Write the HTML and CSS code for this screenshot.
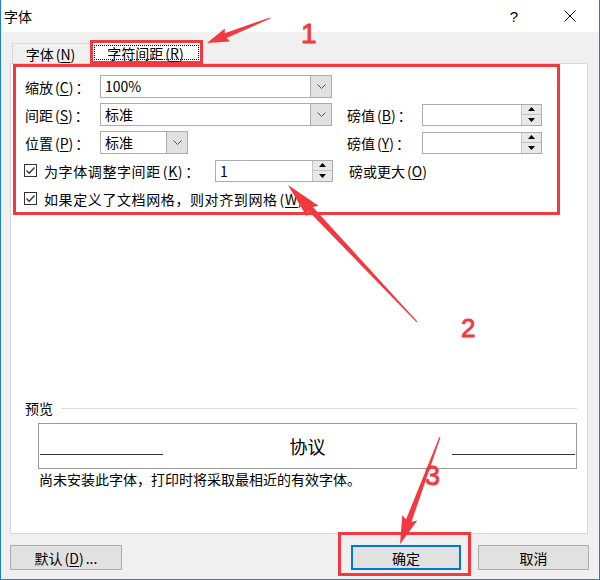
FILE: index.html
```html
<!DOCTYPE html>
<html lang="zh-CN">
<head>
  <meta charset="UTF-8">
  <meta name="viewport" content="width=device-width, initial-scale=1.0">
  <title>字体</title>
  <link rel="stylesheet" href="styles.css">
</head>
<body>
  <div class="window">
    <div class="titlebar">
      <span class="title">字体</span>
      <span class="help">?</span>
      <span class="close">
        <svg width="12" height="12" viewBox="0 0 12 12"><path d="M0.5 0.5L11.5 11.5M11.5 0.5L0.5 11.5" stroke="#000" stroke-width="1" fill="none"/></svg>
      </span>
    </div>

    <div class="dialog">
      <div class="tabs">
        <div class="tab">字体<span class="acc">(<u>N</u>)</span></div>
        <div class="tab active"><span class="focus">字符间距<span class="acc">(<u>R</u>)</span></span></div>
      </div>

      <div class="panel">
        <div class="options">
          <div class="row">
            <label class="lbl">缩放<span class="acc">(<u>C</u>)</span>：</label>
            <div class="combo wide">
              <span class="val">100%</span>
              <span class="drop"><svg width="9" height="5" viewBox="0 0 9 5"><polyline points="0.5,0.5 4.5,4.5 8.5,0.5" fill="none" stroke="#555"/></svg></span>
            </div>
          </div>

          <div class="row">
            <label class="lbl">间距<span class="acc">(<u>S</u>)</span>：</label>
            <div class="combo wide">
              <span class="val">标准</span>
              <span class="drop"><svg width="9" height="5" viewBox="0 0 9 5"><polyline points="0.5,0.5 4.5,4.5 8.5,0.5" fill="none" stroke="#555"/></svg></span>
            </div>
            <label class="lbl side">磅值<span class="acc">(<u>B</u>)</span>：</label>
            <div class="spin">
              <span class="field"></span>
              <span class="spin-btns">
                <span class="sb"><svg width="7" height="4" viewBox="0 0 7 4"><polygon points="0,4 3.5,0 7,4"/></svg></span>
                <span class="sb"><svg width="7" height="4" viewBox="0 0 7 4"><polygon points="0,0 3.5,4 7,0"/></svg></span>
              </span>
            </div>
          </div>

          <div class="row">
            <label class="lbl">位置<span class="acc">(<u>P</u>)</span>：</label>
            <div class="combo narrow">
              <span class="val">标准</span>
              <span class="drop"><svg width="9" height="5" viewBox="0 0 9 5"><polyline points="0.5,0.5 4.5,4.5 8.5,0.5" fill="none" stroke="#555"/></svg></span>
            </div>
            <label class="lbl side push">磅值<span class="acc">(<u>Y</u>)</span>：</label>
            <div class="spin">
              <span class="field"></span>
              <span class="spin-btns">
                <span class="sb"><svg width="7" height="4" viewBox="0 0 7 4"><polygon points="0,4 3.5,0 7,4"/></svg></span>
                <span class="sb"><svg width="7" height="4" viewBox="0 0 7 4"><polygon points="0,0 3.5,4 7,0"/></svg></span>
              </span>
            </div>
          </div>

          <div class="row">
            <label class="check-lbl">
              <span class="box"><svg width="11" height="11" viewBox="0 0 11 11"><polyline points="1.5,5.5 4.2,8.2 9.5,2.5" fill="none" stroke="#333" stroke-width="1.3"/></svg></span>
              为字体调整字间距<span class="acc">(<u>K</u>)</span>：
            </label>
            <div class="spin short">
              <span class="field">1</span>
              <span class="spin-btns">
                <span class="sb"><svg width="7" height="4" viewBox="0 0 7 4"><polygon points="0,4 3.5,0 7,4"/></svg></span>
                <span class="sb"><svg width="7" height="4" viewBox="0 0 7 4"><polygon points="0,0 3.5,4 7,0"/></svg></span>
              </span>
            </div>
            <span class="unit">磅或更大<span class="acc">(<u>O</u>)</span></span>
          </div>

          <div class="row">
            <label class="check-lbl">
              <span class="box"><svg width="11" height="11" viewBox="0 0 11 11"><polyline points="1.5,5.5 4.2,8.2 9.5,2.5" fill="none" stroke="#333" stroke-width="1.3"/></svg></span>
              如果定义了文档网格，则对齐到网格<span class="acc">(<u>W</u>)</span>
            </label>
          </div>
        </div>

        <div class="preview">
          <div class="preview-head">
            <span>预览</span>
            <span class="sep"></span>
          </div>
          <div class="preview-box">
            <span class="rule"></span>
            <span class="sample">协议</span>
            <span class="rule"></span>
          </div>
          <div class="note">尚未安装此字体，打印时将采取最相近的有效字体。</div>
        </div>
      </div>

      <div class="footer">
        <button class="btn">默认<span class="acc">(<u>D</u>)</span>...</button>
        <span class="mark"><button class="btn default">确定</button></span>
        <button class="btn cancel">取消</button>
      </div>
    </div>
  </div>

  <!-- red callouts drawn over the dialog -->
  <svg class="marks" width="600" height="580" viewBox="0 0 600 580">
    <g fill="#f2393f">
      <g transform="translate(207 43) rotate(158.4)">
        <polygon points="0,0 -22,-7 -20,-2.5 -68,-0.6 -68,0.6 -20,2.5 -22,7"/>
      </g>
      <g transform="translate(288 185) rotate(-133.3)">
        <polygon points="0,0 -36,-8 -33,-3 -188,-0.6 -188,0.6 -33,3 -36,8"/>
      </g>
      <g transform="translate(400 544) rotate(110.5)">
        <polygon points="0,0 -28,-8 -25,-3 -114,-0.6 -114,0.6 -25,3 -28,8"/>
      </g>
      <g stroke="#f2393f" stroke-width="0.9">
        <text x="301" y="43" font-size="28">1</text>
        <text x="461" y="337" font-size="26">2</text>
        <text x="425" y="485" font-size="27">3</text>
      </g>
    </g>
  </svg>
</body>
</html>
```

FILE: styles.css
```css
body {
  margin: 0;
  font-family: "Noto Sans CJK SC", sans-serif;
  font-size: 14px;
  color: #000;
}

.window {
  width: 600px;
  height: 580px;
  box-sizing: border-box;
  border: 1px solid #1f7fd1;
  border-top: 0;
  background-color: #f0f0f0;
  display: flex;
  flex-direction: column;
}

.titlebar {
  flex: none;
  height: 32px;
  background-color: #fff;
  display: flex;
  align-items: center;
}

.title {
  margin-left: 3px;
}

.help {
  margin-left: auto;
  margin-right: 46px;
  font-family: "Liberation Sans", sans-serif;
  font-size: 15px;
}

.close {
  display: flex;
  margin-right: 23px;
}

.dialog {
  flex: 1;
  display: flex;
  flex-direction: column;
  padding: 0 11px 0 9px;
}

/* tab strip */
.tabs {
  flex: none;
  height: 31px;
  display: flex;
  align-items: flex-end;
  padding-left: 2px;
}

.tab {
  height: 20px;
  width: 79px;
  box-sizing: border-box;
  border: 1px solid #d9d9d9;
  border-bottom: 0;
  display: flex;
  align-items: center;
  justify-content: center;
  line-height: 1;
}

.tab.active {
  position: relative;
  width: 113px;
  height: 24px;
  margin-left: -1px;
  margin-bottom: -1px;
  background-color: #fff;
  border: 3px solid #f2393f;
  align-items: stretch;
}

.focus {
  flex: 1;
  margin: 2px 1px 1px;
  border: 1px dotted #000;
  display: flex;
  align-items: center;
  justify-content: center;
}

.acc {
  padding: 0 2px;
}

.acc u {
  text-underline-offset: 2px;
}

.panel {
  flex: none;
  height: 471px;
  box-sizing: border-box;
  background-color: #fff;
  border: 1px solid #d9d9d9;
  display: flex;
  flex-direction: column;
}

/* character spacing options */
.options {
  margin-left: 2px;
  width: 547px;
  box-sizing: border-box;
  border: 3px solid #f2393f;
  padding: 8px 0 2px 9px;
  display: flex;
  flex-direction: column;
  gap: 5px;
}

.row {
  height: 23px;
  display: flex;
  align-items: center;
}

.lbl {
  flex: none;
  width: 75px;
}

.lbl.side {
  margin-left: 15px;
}

.lbl.push {
  margin-left: 159px;
}

.combo {
  height: 23px;
  box-sizing: border-box;
  border: 1px solid #acacac;
  background-color: #fff;
  display: flex;
}

.combo.wide {
  width: 232px;
}

.combo.narrow {
  width: 88px;
}

.val {
  flex: 1;
  padding-left: 4px;
  line-height: 21px;
}

.drop {
  width: 20px;
  border-left: 1px solid #acacac;
  background-color: #e1e1e1;
  display: flex;
  align-items: center;
  justify-content: center;
}

.spin {
  width: 120px;
  height: 22px;
  box-sizing: border-box;
  border: 1px solid #acacac;
  background-color: #fff;
  display: flex;
}

.spin.short {
  width: 118px;
}

.field {
  flex: 1;
  padding-left: 4px;
  line-height: 20px;
}

.spin-btns {
  width: 19px;
  border-left: 1px solid #c4c4c4;
  display: flex;
  flex-direction: column;
}

.sb {
  flex: 1;
  background-color: #e8e8e8;
  display: flex;
  align-items: center;
  justify-content: center;
}

.sb + .sb {
  border-top: 1px solid #c4c4c4;
}

.check-lbl {
  flex: none;
  width: 190px;
  display: flex;
  align-items: center;
  white-space: nowrap;
  letter-spacing: 0.6px;
}

.box {
  width: 13px;
  height: 13px;
  box-sizing: border-box;
  margin: 0 7px 0 -1px;
  border: 1px solid #333;
  background-color: #fff;
  display: flex;
  align-items: center;
  justify-content: center;
}

.unit {
  margin-left: 16px;
}

/* preview area */
.preview {
  margin: 185px 10px 0 14px;
}

.preview-head {
  height: 16px;
  display: flex;
  align-items: center;
}

.sep {
  flex: 1;
  height: 1px;
  margin-left: 8px;
  background-color: #dcdcdc;
}

.preview-box {
  margin: 7px 0 0 13px;
  height: 46px;
  box-sizing: border-box;
  border: 1px solid #999;
  display: flex;
  align-items: flex-end;
}

.rule {
  width: 123px;
  margin: 0 1px 13px;
  border-top: 1px solid #333;
}

.sample {
  flex: 1;
  align-self: center;
  text-align: center;
  font-size: 18px;
}

.note {
  margin: 2px 0 0 14px;
  line-height: 16px;
}

/* buttons */
.footer {
  flex: 1;
  display: flex;
  align-items: flex-start;
  padding-top: 11px;
}

.btn {
  height: 25px;
  box-sizing: border-box;
  border: 1px solid #adadad;
  background-color: #e1e1e1;
  font-family: "Noto Sans CJK SC", sans-serif;
  font-size: 14px;
  color: #000;
  padding: 0;
  width: 112px;
}

.btn.default {
  width: 110px;
  border-color: #0078d7;
  box-shadow: inset 0 0 0 1px #0078d7;
}

.btn.cancel {
  width: 111px;
  margin-left: 7px;
  margin-right: -1px;
}

.mark {
  margin-left: auto;
  margin-top: -13px;
  border: 3px solid #f2393f;
  padding: 10px 7px 3px 10px;
  display: flex;
}

.marks {
  position: absolute;
  top: 0;
  left: 0;
  pointer-events: none;
  font-family: "Liberation Sans", sans-serif;
}
```
